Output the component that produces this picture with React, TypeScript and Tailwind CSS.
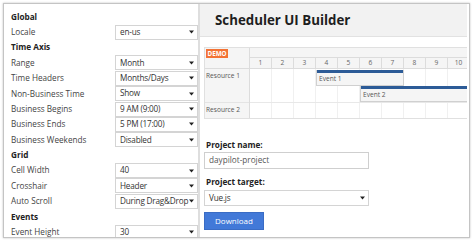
import React from 'react';

type Row = { head?: string; label?: string; value?: string };

const rows: Row[] = [
  { head: 'Global' },
  { label: 'Locale', value: 'en-us' },
  { head: 'Time Axis' },
  { label: 'Range', value: 'Month' },
  { label: 'Time Headers', value: 'Months/Days' },
  { label: 'Non-Business Time', value: 'Show' },
  { label: 'Business Begins', value: '9 AM (9:00)' },
  { label: 'Business Ends', value: '5 PM (17:00)' },
  { label: 'Business Weekends', value: 'Disabled' },
  { head: 'Grid' },
  { label: 'Cell Width', value: '40' },
  { label: 'Crosshair', value: 'Header' },
  { label: 'Auto Scroll', value: 'During Drag&Drop' },
  { head: 'Events' },
  { label: 'Event Height', value: '30' },
];

const days = [1, 2, 3, 4, 5, 6, 7, 8, 9, 10];

function Arrow() {
  return (
    <svg width="5" height="4" viewBox="0 0 5 4" className="shrink-0">
      <path d="M0 0.5 L5 0.5 L2.5 3.5 Z" fill="#222" />
    </svg>
  );
}

function Select({ value, className }: { value: string; className: string }) {
  return (
    <div className={`flex items-center justify-between bg-white border border-[#d4d4d4] pl-[4px] pr-[3px] text-[#333] ${className}`}>
      <span className="whitespace-nowrap shrink-0 tracking-[-0.2px]">{value}</span>
      <Arrow />
    </div>
  );
}

function Settings() {
  return (
    <div className="w-[196px] shrink-0 border-r-2 border-[#dedede] pt-[5px] overflow-hidden text-[8.2px] text-[#444]">
      {rows.map((r, i) =>
        r.head ? (
          <div key={i} className="h-[15.4px] flex items-center pl-[7px] font-bold text-[#222]">
            {r.head}
          </div>
        ) : (
          <div key={i} className="h-[15.4px] flex items-center pl-[7px]">
            <span className="w-[104px] shrink-0">{r.label}</span>
            <Select value={r.value!} className="w-[84px] h-[15px]" />
          </div>
        )
      )}
    </div>
  );
}

function Scheduler() {
  return (
    <div className="ml-[4px] mt-[10px] flex border border-[#e0e0e0] border-r-0 text-[6.6px] text-[#555] overflow-hidden">
      <div className="w-[45px] shrink-0 border-r border-[#dcdcdc] bg-[#f5f5f5]">
        <div className="h-[21px] border-b border-[#dcdcdc] pl-px pt-px">
          <span className="inline-block bg-[#f37335] text-white text-[6.3px] font-bold leading-[9px] px-[1.5px]">DEMO</span>
        </div>
        <div className="h-[34px] border-b border-[#e4e4e4] pl-px pt-[2px]">Resource 1</div>
        <div className="h-[15px] pl-px pt-[2px]">Resource 2</div>
      </div>
      <div className="relative flex-1 overflow-hidden">
        <div className="h-[10px] bg-[#f5f5f5] border-b border-[#dcdcdc]" />
        <div className="h-[11px] flex bg-[#f5f5f5] border-b border-[#dcdcdc] text-[#666]">
          {days.map((d) => (
            <div key={d} className="w-[22px] shrink-0 border-r border-[#dcdcdc] flex items-center justify-center">
              {d}
            </div>
          ))}
        </div>
        {[34, 15].map((h, i) => (
          <div key={i} className={`flex ${i === 0 ? 'border-b border-[#e8e8e8]' : ''}`} style={{ height: h }}>
            {days.map((d) => (
              <div key={d} className="w-[22px] shrink-0 border-r border-[#f0f0f0]" />
            ))}
          </div>
        ))}
        <div className="absolute left-[66px] top-[22px] w-[88px] h-[16px] bg-[#f5f5f5] border border-[#d0d0d0] border-t-0">
          <div className="h-[3px] bg-[#2c5b97]" />
          <div className="pl-[2px] leading-[11px]">Event 1</div>
        </div>
        <div className="absolute left-[110px] top-[38px] right-0 h-[16px] bg-[#f5f5f5] border border-[#d0d0d0] border-t-0 border-r-0">
          <div className="h-[3px] bg-[#2c5b97]" />
          <div className="pl-[2px] leading-[11px]">Event 2</div>
        </div>
      </div>
    </div>
  );
}

export default function App() {
  return (
    <div className="w-[474px] h-[244px] bg-white pt-[3px] pl-[3px] font-['Open_Sans',_sans-serif]">
      <div className="w-[467px] h-[235px] flex border border-[#c4c4c4] shadow-[0_0_2px_rgba(0,0,0,0.25)] overflow-hidden">
        <Settings />
        <div className="flex-1 min-w-0 flex flex-col overflow-hidden pr-[2px]">
          <div className="h-[33px] shrink-0 bg-[#f2f2f2] border-b border-[#e2e2e2] flex items-center pl-[15px]">
            <h1 className="text-[13.3px] font-bold text-[#1e1e1e] pt-[1px]">Scheduler UI Builder</h1>
          </div>
          <Scheduler />
          <div className="pl-[4px] text-[8.2px]">
            <div className="mt-[20px] pl-[2px] font-bold text-[#222] leading-[12px]">Project name:</div>
            <div className="mt-[1px] w-[165px] h-[17px] border border-[#cfcfcf] flex items-center pl-[4px] text-[#555]">
              daypilot-project
            </div>
            <div className="mt-[7px] pl-[2px] font-bold text-[#222] leading-[12px]">Project target:</div>
            <Select value="Vue.js" className="mt-[2px] w-[165px] h-[16px]" />
            <button className="mt-[6px] w-[60px] h-[18px] bg-[#4279d8] border border-[#3a6cc4] text-white text-[8px] flex items-center justify-center">
              Download
            </button>
          </div>
        </div>
      </div>
    </div>
  );
}
